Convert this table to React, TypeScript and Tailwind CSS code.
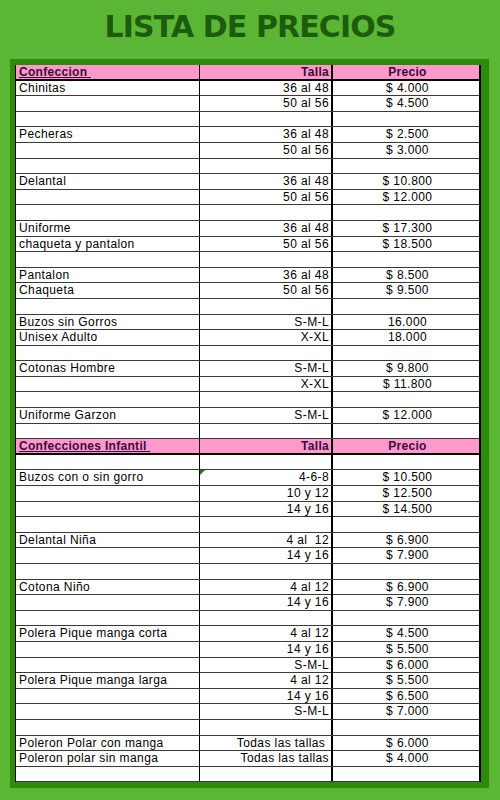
import React from 'react';

type Row =
    | { kind: 'head'; title: string }
    | { kind: 'item'; name?: string; size?: string; price?: string; mark?: boolean };

const rows: Row[] = [
    { kind: 'head', title: 'Confeccion' },
    { kind: 'item', name: 'Chinitas', size: '36 al 48', price: '$ 4.000' },
    { kind: 'item', size: '50 al 56', price: '$ 4.500' },
    { kind: 'item' },
    { kind: 'item', name: 'Pecheras', size: '36 al 48', price: '$ 2.500' },
    { kind: 'item', size: '50 al 56', price: '$ 3.000' },
    { kind: 'item' },
    { kind: 'item', name: 'Delantal', size: '36 al 48', price: '$ 10.800' },
    { kind: 'item', size: '50 al 56', price: '$ 12.000' },
    { kind: 'item' },
    { kind: 'item', name: 'Uniforme', size: '36 al 48', price: '$ 17.300' },
    { kind: 'item', name: 'chaqueta y pantalon', size: '50 al 56', price: '$ 18.500' },
    { kind: 'item' },
    { kind: 'item', name: 'Pantalon', size: '36 al 48', price: '$ 8.500' },
    { kind: 'item', name: 'Chaqueta', size: '50 al 56', price: '$ 9.500' },
    { kind: 'item' },
    { kind: 'item', name: 'Buzos sin Gorros', size: 'S-M-L', price: '16.000' },
    { kind: 'item', name: 'Unisex Adulto', size: 'X-XL', price: '18.000' },
    { kind: 'item' },
    { kind: 'item', name: 'Cotonas Hombre', size: 'S-M-L', price: '$ 9.800' },
    { kind: 'item', size: 'X-XL', price: '$ 11.800' },
    { kind: 'item' },
    { kind: 'item', name: 'Uniforme Garzon', size: 'S-M-L', price: '$ 12.000' },
    { kind: 'item' },
    { kind: 'head', title: 'Confecciones Infantil' },
    { kind: 'item' },
    { kind: 'item', name: 'Buzos con o sin gorro', size: '4-6-8', price: '$ 10.500', mark: true },
    { kind: 'item', size: '10 y 12', price: '$ 12.500' },
    { kind: 'item', size: '14 y 16', price: '$ 14.500' },
    { kind: 'item' },
    { kind: 'item', name: 'Delantal Niña', size: '4 al  12', price: '$ 6.900' },
    { kind: 'item', size: '14 y 16', price: '$ 7.900' },
    { kind: 'item' },
    { kind: 'item', name: 'Cotona Niño', size: '4 al 12', price: '$ 6.900' },
    { kind: 'item', size: '14 y 16', price: '$ 7.900' },
    { kind: 'item' },
    { kind: 'item', name: 'Polera Pique manga corta', size: '4 al 12', price: '$ 4.500' },
    { kind: 'item', size: '14 y 16', price: '$ 5.500' },
    { kind: 'item', size: 'S-M-L', price: '$ 6.000' },
    { kind: 'item', name: 'Polera Pique manga larga', size: '4 al 12', price: '$ 5.500' },
    { kind: 'item', size: '14 y 16', price: '$ 6.500' },
    { kind: 'item', size: 'S-M-L', price: '$ 7.000' },
    { kind: 'item' },
    { kind: 'item', name: 'Poleron Polar con manga', size: 'Todas las tallas\u00a0', price: '$ 6.000' },
    { kind: 'item', name: 'Poleron polar sin manga', size: 'Todas las tallas', price: '$ 4.000' },
    { kind: 'item' },
];

function HeadRow({ title }: { title: string }) {
    return (
        <div className="grid grid-cols-[184px_133px_149px] h-[15.6px] bg-[#ff99cc] border-b-2 border-black text-[12px] leading-[14px] font-bold text-[#3a0c3a] tracking-[0.3px]">
            <div className="border-r border-black pl-[3px] overflow-hidden whitespace-nowrap">
                <span className="underline underline-offset-[1px]">{title}{'\u00a0'}</span>
            </div>
            <div className="border-r-2 border-black pr-[2px] text-right">Talla</div>
            <div className="text-center">Precio</div>
        </div>
    );
}

function ItemRow({ name, size, price, mark }: { name?: string; size?: string; price?: string; mark?: boolean }) {
    return (
        <div className="grid grid-cols-[184px_133px_149px] h-[15.6px] bg-white border-b-[1.5px] border-[#3a3a3a] text-[12px] leading-[15px] text-black tracking-[0.4px]">
            <div className="border-r border-black pl-[3px] whitespace-nowrap overflow-hidden">{name}</div>
            <div className="relative border-r-2 border-black pr-[2px] text-right whitespace-pre">
                {mark && (
                    <span className="absolute left-0 top-0 w-0 h-0 border-t-[5px] border-t-[#1f7a1f] border-r-[5px] border-r-transparent" />
                )}
                {size}
            </div>
            <div className="text-center">{price}</div>
        </div>
    );
}

export default function App() {
    return (
        <div className="w-[500px] h-[800px] bg-[#5cb636] flex flex-col items-start" style={{ fontFamily: '"Liberation Sans", Arial, sans-serif' }}>
            <h1 className="w-full text-center pt-[8px] h-[59px] text-[30px] leading-[38px] font-bold text-[#1c5c0c] tracking-[-0.9px]" style={{ fontFamily: '"DejaVu Sans", sans-serif' }}>
                LISTA DE PRECIOS
            </h1>
            <div className="ml-[10px] w-[479px] bg-[#2e8a0c] pl-[5px] pt-[6px] pb-[6px] pr-[8px]">
                <div className="w-[466px] border-l border-r-2 border-black bg-white">
                    {rows.map((r, i) =>
                        r.kind === 'head' ? <HeadRow key={i} title={r.title} /> : <ItemRow key={i} {...r} />
                    )}
                </div>
            </div>
        </div>
    );
}
